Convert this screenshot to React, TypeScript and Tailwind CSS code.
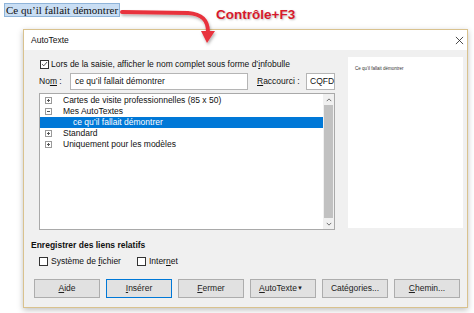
import React from "react"

const ui = { fontFamily: '"Liberation Sans", Arial, sans-serif' }

function Check({ checked }: { checked?: boolean }) {
  return (
    <span className="flex h-[9px] w-[9px] shrink-0 items-center justify-center border border-[#333] bg-white">
      {checked && (
        <svg viewBox="0 0 10 10" className="h-[8px] w-[8px]">
          <path d="M1.5 5.2 L4 7.6 L8.6 2.2" fill="none" stroke="#222" strokeWidth="1.1" />
        </svg>
      )}
    </span>
  )
}

function Plus({ minus }: { minus?: boolean }) {
  return (
    <span className="relative flex h-[7px] w-[7px] shrink-0 items-center justify-center border border-[#9a9a9a] bg-white">
      <span className="absolute h-px w-[3px] bg-[#555]" />
      {!minus && <span className="absolute h-[3px] w-px bg-[#555]" />}
    </span>
  )
}

function Btn({ children, focused, className = "" }: { children: React.ReactNode; focused?: boolean; className?: string }) {
  return (
    <div
      className={
        "flex h-[19px] w-[66px] items-center justify-center border bg-[#e1e1e1] text-[8.5px] text-[#222] " +
        (focused ? "border-[#0078d7] " : "border-[#adadad] ") +
        className
      }
    >
      {children}
    </div>
  )
}

export default function App() {
  return (
    <div className="relative h-[313px] w-[474px] overflow-hidden bg-white" style={ui}>
      {/* top strip */}
      <div className="flex h-[29px] items-start">
        <span
          className="ml-[4px] mt-[3px] border border-[#8fb4d9] bg-[#c9def4] px-[1px] text-[11px] leading-[12px] text-[#111]"
          style={{ fontFamily: '"Liberation Serif", serif' }}
        >
          Ce qu’il fallait démontrer
        </span>
        <span
          className="ml-[96px] mt-[7px] text-[13.5px] font-bold leading-[16px] text-[#d7192b] [text-shadow:1px_1px_2px_rgba(0,0,0,0.25)]"
          style={{ fontFamily: '"Liberation Sans", sans-serif' }}
        >
          Contrôle+F3
        </span>
      </div>

      {/* arrow overlay */}
      <svg className="pointer-events-none absolute left-0 top-0" width="474" height="60" viewBox="0 0 474 60">
        <defs>
          <filter id="sh" x="-20%" y="-20%" width="140%" height="160%">
            <feDropShadow dx="1" dy="2" stdDeviation="1.5" floodColor="#000" floodOpacity="0.3" />
          </filter>
        </defs>
        <g filter="url(#sh)">
          <path d="M122 12 L188 13 C202 14 208 20 208 32" fill="none" stroke="#e8333c" strokeWidth="4" strokeLinecap="round" />
          <path d="M201 31 L215 31 L207 43 Z" fill="#e8333c" />
        </g>
      </svg>

      {/* dialog */}
      <div className="ml-[23px] flex h-[279px] w-[445px] flex-col border border-[#d9c28e] bg-[#f0f0f0] shadow-[0_2px_6px_rgba(0,0,0,0.25)]">
        <div className="flex h-[20px] shrink-0 items-center justify-between bg-white pl-[7px] pr-[3px] text-[8.5px] text-[#111]">
          <span>AutoTexte</span>
          <svg viewBox="0 0 10 10" className="h-[9px] w-[9px]">
            <path d="M1 1 L9 9 M9 1 L1 9" stroke="#222" strokeWidth="0.9" />
          </svg>
        </div>

        <div className="flex pt-[7px]">
          <div className="ml-[15px] flex w-[296px] flex-col">
            <div className="flex h-[14px] items-center gap-[2px] pl-[1px] text-[8.5px] text-[#111]">
              <Check checked />
              <span>
                Lors de la saisie, afficher le nom complet sous forme d’<u>i</u>nfobulle
              </span>
            </div>
            <div className="mt-[2px] flex h-[17px] items-center text-[8.5px] text-[#111]">
              <span className="w-[31px]">
                No<u>m</u> :
              </span>
              <div className="flex h-[17px] w-[178px] items-center border border-[#b5b5b5] bg-white pl-[4px]">
                ce qu’il fallait démontrer
              </div>
              <span className="ml-[9px] w-[49px]">
                <u>R</u>accourci :
              </span>
              <div className="flex h-[17px] w-[29px] items-center border border-[#b5b5b5] bg-white pl-[3px]">
                CQFD
              </div>
            </div>
            <div className="mt-[3px] flex h-[137px] border border-[#a9a9a9] bg-white text-[8.5px] text-[#111]">
              <div className="flex flex-1 flex-col pt-[1px]">
                <div className="flex h-[11px] items-center gap-[11px] pl-[5px]">
                  <Plus />
                  <span>Cartes de visite professionnelles (85 x 50)</span>
                </div>
                <div className="flex h-[11px] items-center gap-[11px] pl-[5px]">
                  <Plus minus />
                  <span>Mes AutoTextes</span>
                </div>
                <div className="flex h-[11px] items-center bg-[#0078d7] pl-[33px] text-white">
                  ce qu’il fallait démontrer
                </div>
                <div className="flex h-[11px] items-center gap-[11px] pl-[5px]">
                  <Plus />
                  <span>Standard</span>
                </div>
                <div className="flex h-[11px] items-center gap-[11px] pl-[5px]">
                  <Plus />
                  <span>Uniquement pour les modèles</span>
                </div>
              </div>
              <div className="flex w-[11px] flex-col bg-[#f0f0f0]">
                <div className="flex h-[11px] items-center justify-center">
                  <svg viewBox="0 0 8 8" className="h-[6px] w-[6px]">
                    <path d="M1 5.5 L4 2.5 L7 5.5" fill="none" stroke="#555" strokeWidth="1.1" />
                  </svg>
                </div>
                <div className="mx-[1px] flex-1 bg-[#c1c1c1]" />
                <div className="flex h-[11px] items-center justify-center">
                  <svg viewBox="0 0 8 8" className="h-[6px] w-[6px]">
                    <path d="M1 2.5 L4 5.5 L7 2.5" fill="none" stroke="#555" strokeWidth="1.1" />
                  </svg>
                </div>
              </div>
            </div>
          </div>
          <div className="ml-[13px] h-[171px] w-[115px] bg-white pl-[7px] pt-[9px]">
            <span className="block text-[4.5px] leading-[5px] text-[#333]">Ce qu’il fallait démontrer</span>
          </div>
        </div>

        <div className="mt-[9px] flex h-[12px] items-center pl-[7px] text-[8.5px] font-bold text-[#111]">
          Enregistrer des liens relatifs
        </div>
        <div className="mt-[4px] flex h-[12px] items-center pl-[15px] text-[8.5px] text-[#111]">
          <Check />
          <span className="ml-[3px]">
            Système de <u>f</u>ichier
          </span>
          <span className="ml-[16px]">
            <Check />
          </span>
          <span className="ml-[3px]">
            Inter<u>n</u>et
          </span>
        </div>
        <div className="mt-[12px] flex gap-[6px] pl-[10px]">
          <Btn>
            <u>A</u>ide
          </Btn>
          <Btn focused>
            <u>I</u>nsérer
          </Btn>
          <Btn>
            <u>F</u>ermer
          </Btn>
          <Btn className="justify-between pl-[6px] pr-[10px]">
            <span>
              <u>A</u>utoTexte
            </span>
            <span className="text-[6px]">▼</span>
          </Btn>
          <Btn>Catégories...</Btn>
          <Btn>
            <u>C</u>hemin...
          </Btn>
        </div>
      </div>
    </div>
  )
}
